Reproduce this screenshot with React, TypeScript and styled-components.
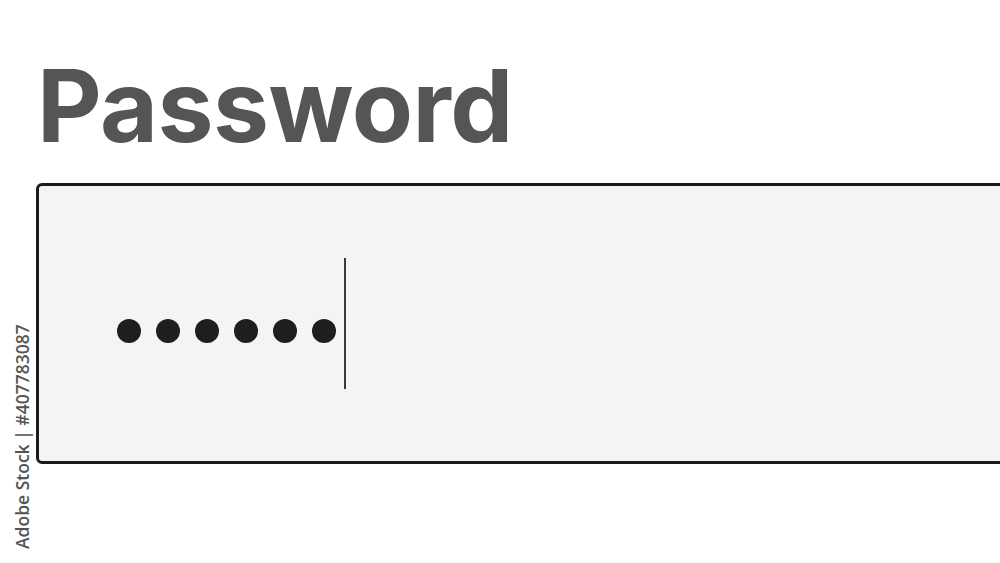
import React from "react";
import styled, { createGlobalStyle } from "styled-components";

const GlobalStyle = createGlobalStyle`
  html, body {
    margin: 0;
    padding: 0;
    background: #ffffff;
    overflow: hidden;
  }
  body {
    font-family: Inter, "Liberation Sans", sans-serif;
  }
`;

const Page = styled.div`
  position: relative;
  width: 1000px;
  height: 563px;
  overflow: hidden;
  padding: 56px 0 0 36px;
  box-sizing: border-box;
`;

const Heading = styled.h1`
  margin: 0 0 27px 1px;
  font-family: Inter, "Liberation Sans", sans-serif;
  font-weight: 700;
  font-size: 100px;
  line-height: 100px;
  letter-spacing: -0.5px;
  color: #555555;
`;

const Field = styled.div`
  width: 1000px;
  height: 281px;
  box-sizing: border-box;
  border: 3px solid #1c1c1c;
  border-radius: 6px;
  background: #f4f4f4;
  display: flex;
  align-items: center;
  padding-left: 78px;
`;

const Dots = styled.div`
  display: flex;
  gap: 15px;
  margin-top: 15px;
`;

const Dot = styled.span`
  width: 24px;
  height: 24px;
  border-radius: 50%;
  background: #1e1e1e;
`;

const Caret = styled.span`
  width: 2px;
  height: 131px;
  margin-left: 8px;
  background: #3a3a3a;
`;

const Credit = styled.div`
  position: absolute;
  left: 12px;
  top: 549px;
  transform: rotate(-90deg);
  transform-origin: left top;
  white-space: nowrap;
  font-family: "Open Sans", "Liberation Sans", sans-serif;
  font-size: 17.5px;
  font-weight: 600;
  line-height: 20px;
  color: #555555;
`;

export default function App() {
  const chars = 6;
  return (
    <>
      <GlobalStyle />
      <Page>
        <Heading>Password</Heading>
        <Field>
          <Dots>
            {Array.from({ length: chars }).map((_, i) => (
              <Dot key={i} />
            ))}
          </Dots>
          <Caret />
        </Field>
        <Credit>Adobe Stock | #407783087</Credit>
      </Page>
    </>
  );
}
